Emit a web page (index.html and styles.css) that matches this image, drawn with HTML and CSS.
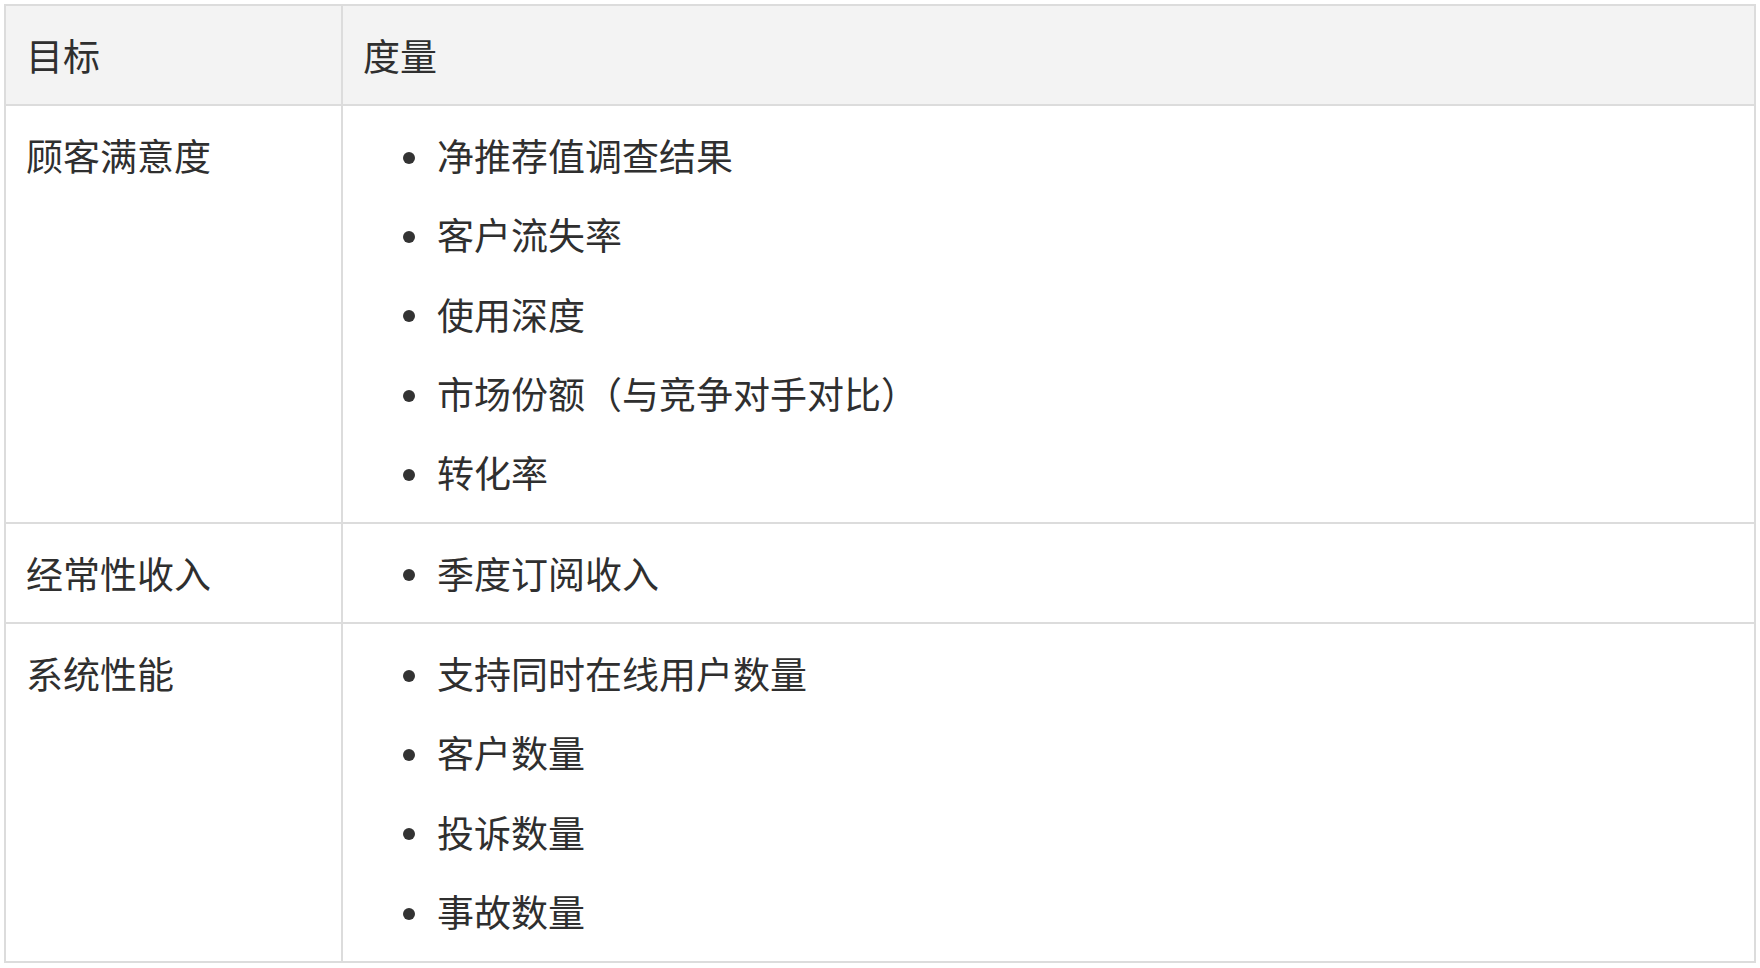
FILE: index.html
```html
<!DOCTYPE html>
<html lang="zh-CN">
<head>
<meta charset="utf-8">
<title>目标与度量</title>
<link rel="stylesheet" href="styles.css">
</head>
<body>
<table class="metrics">
  <thead>
    <tr>
      <th class="col-goal">目标</th>
      <th class="col-measure">度量</th>
    </tr>
  </thead>
  <tbody>
    <tr>
      <td class="col-goal">顾客满意度</td>
      <td class="col-measure">
        <ul class="items">
          <li>净推荐值调查结果</li>
          <li>客户流失率</li>
          <li>使用深度</li>
          <li>市场份额（与竞争对手对比）</li>
          <li>转化率</li>
        </ul>
      </td>
    </tr>
    <tr>
      <td class="col-goal">经常性收入</td>
      <td class="col-measure">
        <ul class="items">
          <li>季度订阅收入</li>
        </ul>
      </td>
    </tr>
    <tr>
      <td class="col-goal">系统性能</td>
      <td class="col-measure">
        <ul class="items">
          <li>支持同时在线用户数量</li>
          <li>客户数量</li>
          <li>投诉数量</li>
          <li>事故数量</li>
        </ul>
      </td>
    </tr>
  </tbody>
</table>
</body>
</html>
```

FILE: styles.css
```css
html, body {
  margin: 0;
  padding: 0;
  background: #ffffff;
}

body {
  padding: 4px;
  font-family: "Noto Sans CJK SC", "Noto Sans", sans-serif;
  font-size: 37px;
  color: #2f2f2f;
}

.metrics {
  width: 1752px;
  table-layout: fixed;
  border-collapse: separate;
  border-spacing: 0;
  border-top: 2px solid #dcdcdc;
  border-left: 2px solid #dcdcdc;
}

.metrics th,
.metrics td {
  border-right: 2px solid #dcdcdc;
  border-bottom: 2px solid #dcdcdc;
  padding: 9.5px 20px;
  line-height: 79.35px;
  text-align: left;
  vertical-align: top;
  font-weight: normal;
}

.metrics th {
  background: #f3f3f3;
}

.metrics .col-goal {
  width: 295px;
}

.items {
  list-style: none;
  margin: 0;
  padding: 0 0 0 74px;
}

.items li {
  display: flex;
  align-items: center;
}

.items li::before {
  content: "";
  flex: none;
  width: 12px;
  height: 12px;
  border-radius: 50%;
  background: #333333;
  margin-left: -34px;
  margin-right: 22px;
  transform: translateY(2px);
}
```
